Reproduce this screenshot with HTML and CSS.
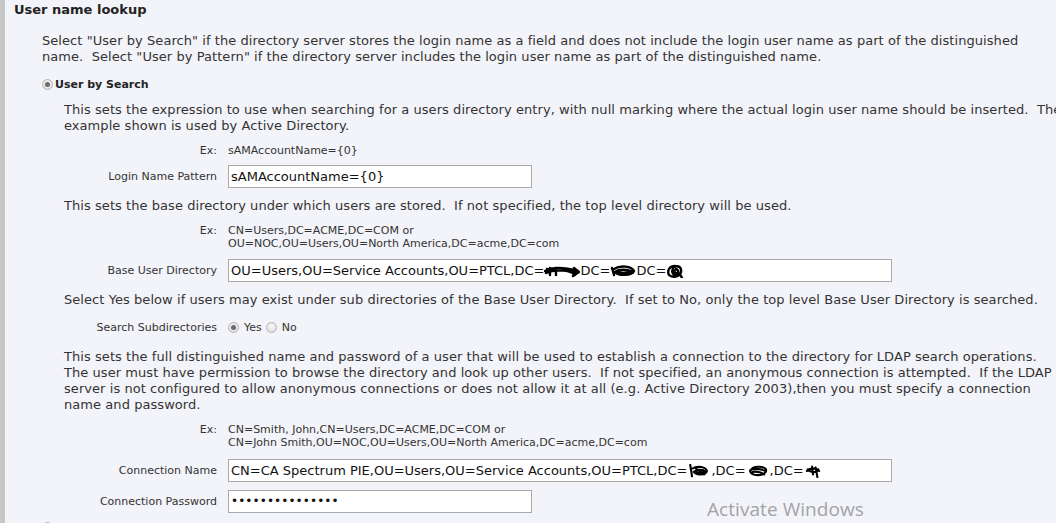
FILE: index.html
```html
<!DOCTYPE html>
<html>
<head>
<meta charset="utf-8">
<link rel="stylesheet" href="styles.css">
</head>
<body>
<div class="panel">
  <h2 class="title">User name lookup</h2>
  <p class="desc">Select "User by Search" if the directory server stores the login name as a field and does not include the login user name as part of the distinguished name.&nbsp; Select "User by Pattern" if the directory server includes the login user name as part of the distinguished name.</p>

  <div class="choice"><span class="radio on"></span><span class="choice-label">User by Search</span></div>

  <div class="sub">
    <p class="para p1">This sets the expression to use when searching for a users directory entry, with null marking where the actual login user name should be inserted.&nbsp; The example shown is used by Active Directory.</p>
    <div class="row ex"><span class="lbl">Ex:</span><span class="val">sAMAccountName={0}</span></div>
    <div class="row field"><span class="lbl">Login Name Pattern</span><div class="input short">sAMAccountName={0}</div></div>

    <p class="para one">This sets the base directory under which users are stored.&nbsp; If not specified, the top level directory will be used.</p>
    <div class="row ex"><span class="lbl">Ex:</span><span class="val">CN=Users,DC=ACME,DC=COM or<br>OU=NOC,OU=Users,OU=North America,DC=acme,DC=com</span></div>
    <div class="row field base"><span class="lbl">Base User Directory</span><div class="input long">OU=Users,OU=Service Accounts,OU=PTCL,DC=<svg class="scr w36" viewBox="0 0 36 14"><path d="M1 7 C8 3 20 3 34 7 M2 9 C10 5 22 6 33 9 M3 5 C12 8 24 4 31 11 M6 4 L6 11 M12 4 L12 11 M30 4 L35 8 L29 12" /></svg>DC=<svg class="scr w26" viewBox="0 0 26 14"><path d="M2 4 L4 11 M4 5 C10 1 22 2 24 7 C22 12 8 12 5 8 C9 5 18 5 22 8 M7 7 C12 10 18 9 22 6" /></svg>DC=<svg class="scr w18" viewBox="0 0 18 14"><path d="M9 2 C3 2 1 7 3 11 C6 14 14 13 15 8 C16 3 12 1 8 3 C5 6 6 11 10 11 C13 10 13 6 10 5 C8 6 8 9 10 9 M14 10 L16 14" /></svg></div></div>

    <p class="para one">Select Yes below if users may exist under sub directories of the Base User Directory.&nbsp; If set to No, only the top level Base User Directory is searched.</p>
    <div class="row field subdir"><span class="lbl">Search Subdirectories</span><span class="opts"><span class="radio on"></span><span class="opt">Yes</span><span class="radio"></span><span class="opt">No</span></span></div>

    <p class="para p4">This sets the full distinguished name and password of a user that will be used to establish a connection to the directory for LDAP search operations.&nbsp; The user must have permission to browse the directory and look up other users.&nbsp; If not specified, an anonymous connection is attempted.&nbsp; If the LDAP server is not configured to allow anonymous connections or does not allow it at all (e.g. Active Directory 2003),then you must specify a connection name and password.</p>
    <div class="row ex"><span class="lbl">Ex:</span><span class="val">CN=Smith, John,CN=Users,DC=ACME,DC=COM or<br>CN=John Smith,OU=NOC,OU=Users,OU=North America,DC=acme,DC=com</span></div>
    <div class="row field conn"><span class="lbl">Connection Name</span><div class="input long">CN=CA Spectrum PIE,OU=Users,OU=Service Accounts,OU=PTCL,DC=<svg class="scr w24" viewBox="0 0 24 16"><path d="M2 1 L4 14 M5 5 C10 2 20 3 21 8 C20 13 8 13 6 9 C9 6 17 6 19 9 C16 11 10 11 8 8 M7 4 L18 12" /></svg>,DC=<svg class="scr w24" viewBox="0 0 24 16"><path d="M4 7 C6 2 18 2 21 6 C23 11 14 14 7 12 C2 10 2 7 5 6 C10 5 17 6 20 8 M6 9 C11 8 17 10 19 12" /></svg>,DC=<svg class="scr w18" viewBox="0 0 18 16"><path d="M2 8 C6 4 12 4 16 8 M3 6 C6 10 12 11 15 6 M8 3 L9 12 M12 4 L14 15" /></svg></div></div>
    <div class="row field pwrow"><span class="lbl">Connection Password</span><div class="input short pw">•••••••••••••••</div></div>
  </div>

  <div class="choice next"><span class="radio"></span><span class="choice-label">User by Pattern</span></div>
</div>
<div class="watermark">Activate Windows</div>
</body>
</html>
```
FILE: styles.css
```css
html, body {
  margin: 0;
  padding: 0;
  height: 100%;
  overflow: hidden;
}
body {
  background: #f3f4f9;
  color: #333333;
  font-family: "DejaVu Sans", Verdana, sans-serif;
  font-size: 13px;
  letter-spacing: 0.06px;
}
.panel {
  border-left: 5px solid #c6c6c6;
  min-height: 100%;
  box-sizing: border-box;
  padding-top: 2px;
  width: 1200px;
}
.title {
  margin: 0 0 0 9px;
  font-size: 13px;
  font-weight: bold;
  line-height: 16px;
  color: #222;
  letter-spacing: 0;
}
.desc {
  margin: 15px 0 0 37px;
  line-height: 16px;
  width: 995px;
}
.choice {
  display: flex;
  align-items: center;
  margin: 12px 0 0 37px;
  height: 14px;
}
.choice-label {
  font-weight: bold;
  font-size: 11px;
  color: #222;
  letter-spacing: 0;
}
.radio {
  display: inline-block;
  width: 11px;
  height: 11px;
  border-radius: 50%;
  border: 1px solid #b4b4b4;
  background: radial-gradient(circle at 50% 40%, #fafafa, #d8d8d8);
  box-sizing: border-box;
  position: relative;
  flex: none;
  margin-right: 2px;
}
.radio.on::after {
  content: "";
  position: absolute;
  left: 2px;
  top: 2px;
  width: 5px;
  height: 5px;
  border-radius: 50%;
  background: #6b6b6b;
}
.sub {
  margin-left: 59px;
}
.para {
  margin: 10px 0 0 0;
  line-height: 16px;
  width: 1002px;
}
.para.p1 { margin-top: 11px; }
.para.one { margin-top: 10px; }
.para.p4 { margin-top: 15px; }
.row {
  display: grid;
  grid-template-columns: 153px auto;
  column-gap: 11px;
  letter-spacing: 0;
}
.lbl {
  text-align: right;
  font-size: 11px;
  white-space: nowrap;
}
.ex {
  margin-top: 10px;
  font-size: 11px;
  line-height: 13px;
}
.ex .val {
  font-size: 11px;
  white-space: nowrap;
}
.field {
  align-items: center;
  margin-top: 8px;
}
.field.base { margin-top: 9px; }
.field.conn { margin-top: 10px; }
.field.pwrow { margin-top: 8px; }
.input {
  box-sizing: border-box;
  height: 23px;
  background: #fff;
  border: 1px solid #a9a9a9;
  font-size: 13px;
  line-height: 21px;
  padding-left: 2px;
  color: #111;
  white-space: nowrap;
  overflow: hidden;
  display: flex;
  align-items: center;
}
.input.short { width: 304px; }
.input.long { width: 664px; }
.input.pw { font-size: 12px; letter-spacing: 0.1px; }
.scr {
  height: 14px;
  flex: none;
}
.scr path {
  fill: none;
  stroke: #000;
  stroke-width: 2.4;
  stroke-linecap: round;
}
.w36 { width: 36px; }
.w26 { width: 26px; }
.w24 { width: 24px; }
.w18 { width: 18px; }
.subdir { margin-top: 13px; }
.opts {
  display: flex;
  align-items: center;
  font-size: 11px;
}
.opt { margin: 0 4px 0 3px; }
.next {
  margin-top: 7px;
}
.watermark {
  position: absolute;
  left: 707px;
  top: 496px;
  font-family: "Open Sans", "Noto Sans", sans-serif;
  font-size: 19px;
  color: #a3a3a6;
}
```
